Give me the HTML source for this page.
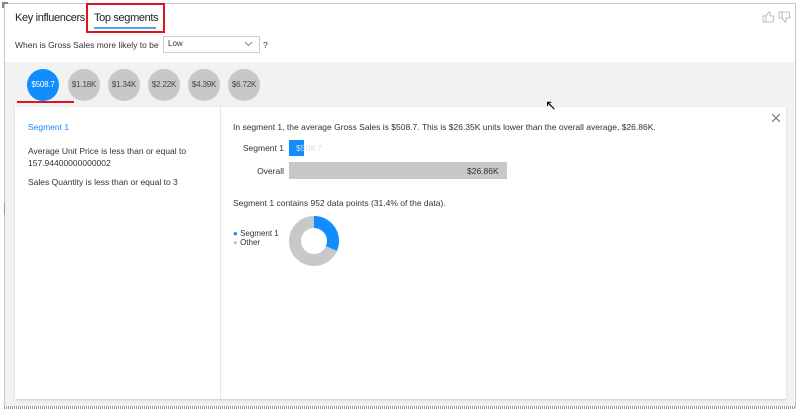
<!DOCTYPE html><html><head><style>
body{margin:0;width:800px;height:414px;background:#fff;font-family:"Liberation Sans",sans-serif;position:relative;overflow:hidden}
.a{position:absolute}
.c{position:absolute;top:69px;width:32px;height:32px;border-radius:50%;background:#c8c8c8;color:#444;font-size:8px;line-height:32px;text-align:center;letter-spacing:-0.2px}
.t{font-size:8.5px;color:#333}
</style></head><body>
<div class="a" style="left:4px;top:3px;width:790px;height:403px;border:1px solid #c6c6c6"></div>
<div class="a" style="left:4px;top:406px;width:791px;height:3px;background:repeating-linear-gradient(90deg,#999 0 1px,#fff 1px 2px)"></div>
<div class="a" style="left:2px;top:2px;width:4px;height:4px;border-left:2px solid #888;border-top:2px solid #888"></div>
<div class="a" style="left:4px;top:203px;width:3px;height:12px;background:#999"></div>
<div class="a" style="left:15px;top:12px;font-size:11px;letter-spacing:-0.35px;color:#222">Key influencers</div>
<div class="a" style="left:86px;top:3px;width:75px;height:26px;border:2px solid #e0141e"></div>
<div class="a" style="left:94px;top:12px;font-size:11px;letter-spacing:-0.35px;color:#222">Top segments</div>
<div class="a" style="left:94px;top:27px;width:62px;height:2px;background:#5aa0e6"></div>
<div class="a" style="left:15px;top:40px;font-size:8.5px;color:#333">When is Gross Sales more likely to be</div>
<div class="a" style="left:163px;top:36px;width:95px;height:15px;border:1px solid #ccc"></div>
<div class="a" style="left:168px;top:39px;font-size:8px;color:#333">Low</div>
<svg class="a" style="left:244px;top:41px" width="9" height="6"><path d="M1 1L4.5 4.5L8 1" fill="none" stroke="#888"/></svg>
<div class="a" style="left:263px;top:40px;font-size:8.5px;color:#333">?</div>
<svg class="a" style="left:762px;top:11px" width="30" height="12" fill="none" stroke="#aaa" stroke-width="0.8">
<path d="M1 5h3v6H1zM4 5l3-4h1v4h4l-1 6H4"/>
<path d="M17 7h3V1h-3zM20 7l3 4h1V7h4l-1-6h-7"/>
</svg>
<div class="a" style="left:5px;top:62px;width:789px;height:344px;background:#f2f2f2"></div>
<div class="c" style="left:27px;background:#118dff;color:#fff">$508.7</div>
<div class="c" style="left:68px">$1.18K</div>
<div class="c" style="left:108px">$1.34K</div>
<div class="c" style="left:148px">$2.22K</div>
<div class="c" style="left:188px">$4.39K</div>
<div class="c" style="left:228px">$6.72K</div>
<div class="a" style="left:17px;top:101px;width:57px;height:2px;background:#e0141e"></div>
<div class="a" style="left:15px;top:107px;width:771px;height:292px;background:#fff;box-shadow:0 1px 2px #ccc"></div>
<div class="a" style="left:220px;top:107px;width:1px;height:292px;background:#e6e6e6"></div>
<svg class="a" style="left:772px;top:114px" width="8" height="8"><path d="M0 0L8 8M8 0L0 8" stroke="#666"/></svg>
<div class="a t" style="left:28px;top:122px;color:#118dff">Segment 1</div>
<div class="a t" style="left:28px;top:145px;line-height:12px;width:190px">Average Unit Price is less than or equal to 157.94400000000002</div>
<div class="a t" style="left:28px;top:177px">Sales Quantity is less than or equal to 3</div>
<div class="a t" style="left:233px;top:122px">In segment 1, the average Gross Sales is $508.7. This is $26.35K units lower than the overall average, $26.86K.</div>
<div class="a t" style="left:220px;width:64px;text-align:right;top:143px">Segment 1</div>
<div class="a" style="left:289px;top:140px;width:15px;height:16px;background:#118dff"></div>
<div class="a t" style="left:296px;top:143px;color:#ddd">$508.7</div>
<div class="a t" style="left:220px;width:64px;text-align:right;top:166px">Overall</div>
<div class="a" style="left:289px;top:162px;width:218px;height:17px;background:#c8c8c8"></div>
<div class="a t" style="left:467px;top:166px">$26.86K</div>
<div class="a t" style="left:233px;top:198px">Segment 1 contains 952 data points (31.4% of the data).</div>
<div class="a t" style="left:233px;top:229px;font-size:8px"><span style="color:#118dff">●</span> Segment 1<br><span style="color:#ccc">●</span> Other</div>
<svg class="a" style="left:288px;top:215px" width="52" height="52" viewBox="0 0 52 52">
<circle cx="26" cy="26" r="19" fill="none" stroke="#c8c8c8" stroke-width="12"/>
<circle cx="26" cy="26" r="19" fill="none" stroke="#118dff" stroke-width="12" stroke-dasharray="37.5 200" transform="rotate(-90 26 26)"/>
</svg>
<div class="a" style="left:545px;top:97px;font-size:14px">↖</div>
</body></html>
